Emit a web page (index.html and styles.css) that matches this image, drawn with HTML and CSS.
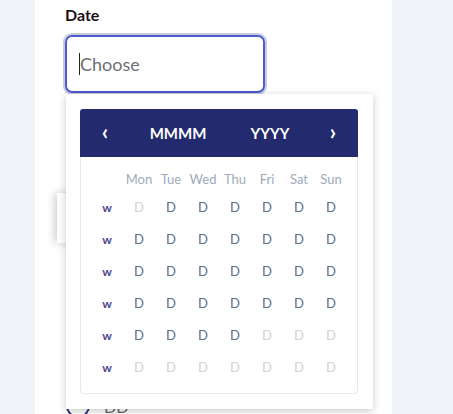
FILE: index.html
```html
<!DOCTYPE html>
<html lang="en">
<head>
    <meta charset="UTF-8">
    <meta name="viewport" content="width=device-width, initial-scale=1.0">
    <title>Date picker</title>
    <link rel="stylesheet" href="styles.css">
</head>
<body>
    <div class="card">
        <div class="field">
            <label class="label" for="date">Date</label>
            <div class="input-wrap">
                <div class="input" id="date"><span class="caret"></span><span class="placeholder">Choose</span></div>

                <!-- Calendar popup -->
                <div class="popup">
                    <div class="calendar">
                        <div class="cal-head">
                            <span class="nav">&lsaquo;</span>
                            <span>MMMM</span>
                            <span>YYYY</span>
                            <span class="nav">&rsaquo;</span>
                        </div>
                        <div class="cal-body" id="calBody"></div>
                    </div>
                </div>
            </div>
        </div>

        <div class="behind"></div>

        <div class="radio-row">
            <span class="radio"></span>
            <span class="radio-label">DD</span>
        </div>
    </div>

    <script>
        const body = document.getElementById('calBody');
        const days = ['Mon', 'Tue', 'Wed', 'Thu', 'Fri', 'Sat', 'Sun'];
        // which days are outside the month, per row
        const muted = [
            [1, 0, 0, 0, 0, 0, 0],
            [0, 0, 0, 0, 0, 0, 0],
            [0, 0, 0, 0, 0, 0, 0],
            [0, 0, 0, 0, 0, 0, 0],
            [0, 0, 0, 0, 1, 1, 1],
            [1, 1, 1, 1, 1, 1, 1]
        ];

        let html = '<span class="cell"></span>';
        days.forEach(d => { html += '<span class="cell wd">' + d + '</span>'; });
        muted.forEach(row => {
            html += '<span class="cell wk">w</span>';
            row.forEach(m => {
                html += '<span class="cell day' + (m ? ' off' : '') + '">D</span>';
            });
        });
        body.innerHTML = html;
    </script>
</body>
</html>
```

FILE: styles.css
```css
body { margin: 0; background: #f0f4f8; font-family: "Lato", "Open Sans", sans-serif; height: 414px; overflow: hidden; }
.card { margin-left: 35px; width: 327px; min-height: 414px; background: #fff; padding: 4px 0 0 30px; box-sizing: content-box; }
.label { display: block; font-weight: 700; font-size: 16px; color: #1d0e14; line-height: 22px; }
.input-wrap { position: relative; margin-top: 9px; }
.input {
    width: 200px;
    height: 58px;
    box-sizing: border-box;
    border: 2px solid #4d5bcc;
    border-radius: 7px;
    box-shadow: 0 0 0 2px #c9cbdc;
    display: flex;
    align-items: center;
    padding-left: 12px;
    font-size: 18px;
    color: #6b7077;
}
.caret { width: 1px; height: 22px; background: #222; }

.popup {
    position: absolute;
    top: 59px;
    left: 1px;
    width: 307px;
    height: 315px;
    box-sizing: border-box;
    background: #fff;
    padding: 15px 15px 15px 14px;
    box-shadow: 0 2px 8px rgba(0,0,0,0.22);
    z-index: 10;
}
.calendar { height: 100%; display: flex; flex-direction: column; }
.cal-head {
    height: 49px;
    background: #232a6e;
    color: #fff;
    border-radius: 3px 3px 0 0;
    display: grid;
    grid-template-columns: 50px 96px 88px 38px;
    align-items: center;
    justify-items: center;
    font-weight: 700;
    font-size: 15px;
}
.cal-head .nav { font-size: 22px; line-height: 1; margin-top: -3px; }
.cal-body {
    flex: 1;
    border: 1px solid #e6e9ee;
    border-top: none;
    border-radius: 0 0 4px 4px;
    padding: 10px 10px;
    display: grid;
    grid-template-columns: repeat(8, 32px);
    grid-template-rows: 24px repeat(6, 32px);
    align-content: start;
}
.cell { display: flex; align-items: center; justify-content: center; font-size: 13px; }
.wd { color: #9dabbd; }
.day { color: #5a6d8b; }
.day.off { color: #cfd3d8; }
.wk { color: #46488c; font-size: 12px; font-weight: 700; }

.behind { margin: 100px 0 0 -8px; width: 40px; height: 50px; box-shadow: -3px 0 8px rgba(0,0,0,0.18); }
.radio-row { display: flex; align-items: center; gap: 14px; margin-top: 151px; margin-left: 1px; }
.radio { width: 20px; height: 20px; border: 2px solid #2e3376; border-radius: 50%; }
.radio-label { font-size: 16px; color: #666; }
```
